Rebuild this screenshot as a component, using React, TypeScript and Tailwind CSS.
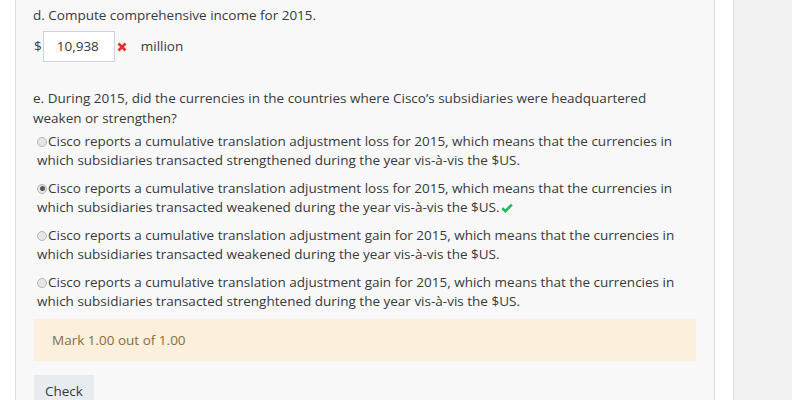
import React from "react";

const Radio = ({ checked }: { checked?: boolean }) => (
  <span className="inline-flex items-center justify-center w-[10px] h-[10px] rounded-full border border-[#b5b5b5] bg-[#e6e6e6] mr-[1px] shrink-0">
    {checked && <span className="w-[5px] h-[5px] rounded-full bg-[#555]" />}
  </span>
);

const options = [
  {
    a: "Cisco reports a cumulative translation adjustment loss for 2015, which means that the currencies in",
    b: "which subsidiaries transacted strengthened during the year vis-à-vis the $US.",
  },
  {
    a: "Cisco reports a cumulative translation adjustment loss for 2015, which means that the currencies in",
    b: "which subsidiaries transacted weakened during the year vis-à-vis the $US.",
    checked: true,
  },
  {
    a: "Cisco reports a cumulative translation adjustment gain for 2015, which means that the currencies in",
    b: "which subsidiaries transacted weakened during the year vis-à-vis the $US.",
  },
  {
    a: "Cisco reports a cumulative translation adjustment gain for 2015, which means that the currencies in",
    b: "which subsidiaries transacted strenghtened during the year vis-à-vis the $US.",
  },
];

export default function App() {
  return (
    <div
      className="flex w-[792px] h-[400px] overflow-hidden bg-white text-[13.5px] text-[#373a3c]"
      style={{ fontFamily: '"Open Sans", "Noto Sans", sans-serif' }}
    >
      <div className="w-[15px] shrink-0 bg-white" />
      <div className="w-[700px] shrink-0 border-l border-r border-[#dcdcdc] bg-[#f8f8f8] px-[17px] pt-[5px]">
        <div className="leading-[20px]">d. Compute comprehensive income for 2015.</div>
        <div className="flex items-center mt-[6px] h-[31px]">
          <span className="ml-[1px]">$</span>
          <span className="ml-[1px] w-[72px] h-[31px] border border-[#ccd3da] bg-white flex items-center pl-[13px]">
            10,938
          </span>
          <svg width="10" height="10" viewBox="0 0 10 10" className="ml-[2px]">
            <path d="M1.5 1.5 L8.5 8.5 M8.5 1.5 L1.5 8.5" stroke="#e2302f" strokeWidth="2.6" strokeLinecap="butt" />
          </svg>
          <span className="ml-[14px]">million</span>
        </div>
        <div className="mt-[26px] leading-[20px]">
          e. During 2015, did the currencies in the countries where Cisco’s subsidiaries were headquartered
          <br />
          weaken or strengthen?
        </div>
        <div className="mt-[4px] pl-[4px] flex flex-col gap-[9px]">
          {options.map((o, i) => (
            <div key={i} className="leading-[19px]">
              <div className="flex items-center">
                <Radio checked={o.checked} />
                <span>{o.a}</span>
              </div>
              <div className="flex items-center">
                <span>{o.b}</span>
                {o.checked && (
                  <svg width="12" height="10" viewBox="0 0 12 10" className="ml-[1px]">
                    <path d="M1.2 5.2 L4.4 8.2 L10.8 1.6" stroke="#1fbd5f" strokeWidth="2.6" fill="none" />
                  </svg>
                )}
              </div>
            </div>
          ))}
        </div>
        <div className="mt-[8px] ml-[1px] w-[662px] h-[42px] bg-[#fcefdc] text-[#8a6d3b] flex items-center pl-[18px]">
          Mark 1.00 out of 1.00
        </div>
        <div className="mt-[14px] ml-[1px] inline-flex items-center px-[11px] h-[32px] bg-[#e9ecef] text-[#373a3c]">
          Check
        </div>
      </div>
      <div className="w-[18px] shrink-0 bg-white" />
      <div className="flex-1 border-l border-[#dcdcdc] bg-[#f2f2f2]" />
    </div>
  );
}
